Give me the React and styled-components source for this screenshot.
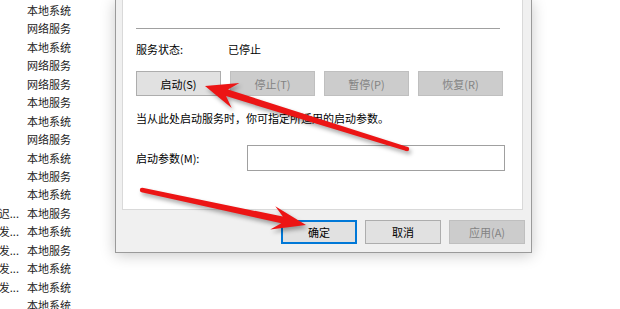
import React from 'react'
import styled, { createGlobalStyle } from 'styled-components'

const GlobalStyle = createGlobalStyle`
  html, body {
    margin: 0;
    padding: 0;
    background: #ffffff;
  }
  body {
    font-family: "Noto Sans CJK SC", "Microsoft YaHei", sans-serif;
  }
`

const services = [
  ['', '本地系统'],
  ['', '网络服务'],
  ['', '本地系统'],
  ['', '网络服务'],
  ['', '网络服务'],
  ['', '本地服务'],
  ['', '本地系统'],
  ['', '网络服务'],
  ['', '本地系统'],
  ['', '本地服务'],
  ['', '本地系统'],
  ['自动(延迟...', '本地服务'],
  ['手动(触发...', '本地系统'],
  ['手动(触发...', '本地服务'],
  ['手动(触发...', '本地系统'],
  ['手动(触发...', '本地系统'],
  ['', '本地系统'],
]

const controlButtons = [
  { label: '启动(S)', enabled: true },
  { label: '停止(T)', enabled: false },
  { label: '暂停(P)', enabled: false },
  { label: '恢复(R)', enabled: false },
]

// arrow polygon built from tail -> tip
const arrowPoints = (tail, tip, headLen, headHalf, shaftTail, shaftHead) => {
  const dx = tip[0] - tail[0]
  const dy = tip[1] - tail[1]
  const len = Math.hypot(dx, dy)
  const ux = dx / len
  const uy = dy / len
  const nx = -uy
  const ny = ux
  const at = (back, side) => [tip[0] - ux * back + nx * side, tip[1] - uy * back + ny * side]
  const notch = headLen * 0.72
  const pts = [
    at(len, shaftTail),
    at(notch, shaftHead),
    at(headLen, headHalf),
    tip,
    at(headLen, -headHalf),
    at(notch, -shaftHead),
    at(len, -shaftTail),
  ]
  return pts.map((p) => p[0].toFixed(1) + ',' + p[1].toFixed(1)).join(' ')
}

const arrows = [
  { tail: [407, 149], tip: [205, 86], head: 32, half: 13 },
  { tail: [142, 190], tip: [306, 225], head: 34, half: 12 },
]

const App = () => {
  return (
    <>
      <GlobalStyle />
      <Page>
        <ServiceList>
          {services.map(([startup, account], index) => (
            <ServiceRow key={index}>
              <StartupCell>{startup && <span>{startup}</span>}</StartupCell>
              <AccountCell>{account}</AccountCell>
            </ServiceRow>
          ))}
        </ServiceList>

        <Dialog>
          <Panel>
            <Separator />
            <StatusRow>
              <FieldLabel>服务状态:</FieldLabel>
              <span>已停止</span>
            </StatusRow>
            <ButtonRow>
              {controlButtons.map((btn) => (
                <ControlButton key={btn.label} disabled={!btn.enabled}>
                  {btn.label}
                </ControlButton>
              ))}
            </ButtonRow>
            <Hint>当从此处启动服务时，你可指定所适用的启动参数。</Hint>
            <ParamRow>
              <ParamLabel>启动参数(M):</ParamLabel>
              <ParamInput />
            </ParamRow>
          </Panel>
          <Footer>
            <FooterButton $primary>确定</FooterButton>
            <FooterButton>取消</FooterButton>
            <FooterButton disabled>应用(A)</FooterButton>
          </Footer>
        </Dialog>

        <ArrowLayer width="620" height="309" viewBox="0 0 620 309">
          {arrows.map((a, i) => (
            <g key={i}>
              <polygon points={arrowPoints(a.tail, a.tip, a.head, a.half, 2.2, 3.4)} fill="#ec1515" />
              <circle cx={a.tail[0]} cy={a.tail[1]} r="2.2" fill="#ec1515" />
            </g>
          ))}
        </ArrowLayer>
      </Page>
    </>
  )
}

export default App

const Page = styled.div`
  position: relative;
  display: flex;
  flex-flow: row nowrap;
  align-items: flex-start;
  width: 620px;
  height: 309px;
  overflow: hidden;
  background: #ffffff;
`

const ServiceList = styled.div`
  width: 100px;
  flex: none;
  padding-top: 1px;
  font-size: 11px;
  color: #222;
`

const ServiceRow = styled.div`
  display: flex;
  height: 18.44px;
  line-height: 18.44px;
  white-space: nowrap;
`

const StartupCell = styled.div`
  width: 19px;
  flex: none;
  display: flex;
  justify-content: flex-end;
  overflow: hidden;
  margin-right: 8px;
  span {
    flex: none;
  }
`

const AccountCell = styled.div`
  flex: none;
`

const Dialog = styled.div`
  width: 403px;
  height: 252px;
  margin-left: 15px;
  flex: none;
  display: flex;
  flex-flow: column;
  background: #f0f0f0;
  border: 1px solid #9a9a9a;
  border-top: none;
  box-shadow: 0 2px 14px rgba(0, 0, 0, 0.22);
  padding: 0 6px;
  box-sizing: content-box;
  font-size: 11px;
  color: #000;
`

const Panel = styled.div`
  width: 386px;
  height: 209px;
  background: #ffffff;
  border: 1px solid #d9d9d9;
  border-top: none;
  padding-left: 13px;
  box-sizing: content-box;
`

const Separator = styled.div`
  width: 364px;
  height: 1px;
  margin-top: 28px;
  background: #a0a0a0;
`

const StatusRow = styled.div`
  display: flex;
  align-items: center;
  height: 18px;
  margin-top: 11px;
`

const FieldLabel = styled.span`
  width: 92px;
`

const ButtonRow = styled.div`
  display: flex;
  gap: 9px;
  margin-top: 13px;
`

const ControlButton = styled.button`
  width: 85px;
  height: 25px;
  padding: 0;
  font-family: inherit;
  font-size: 11px;
  color: #000;
  background: #e1e1e1;
  border: 1px solid #adadad;
  &:disabled {
    color: #838383;
    background: #cccccc;
    border-color: #bfbfbf;
  }
`

const Hint = styled.div`
  margin-top: 13px;
  height: 18px;
  line-height: 18px;
`

const ParamRow = styled.div`
  display: flex;
  align-items: center;
  margin-top: 18px;
`

const ParamLabel = styled.span`
  width: 111px;
`

const ParamInput = styled.div`
  width: 256px;
  height: 24px;
  background: #ffffff;
  border: 1px solid #a0a0a0;
`

const Footer = styled.div`
  display: flex;
  justify-content: flex-end;
  gap: 8px;
  padding-top: 10px;
`

const FooterButton = styled.button`
  width: 76px;
  height: 24px;
  padding: 0;
  font-family: inherit;
  font-size: 11px;
  color: #000;
  background: #e1e1e1;
  border: ${(p) => (p.$primary ? '2px solid #0078d7' : '1px solid #adadad')};
  &:disabled {
    color: #838383;
    background: #cccccc;
    border-color: #bfbfbf;
  }
`

const ArrowLayer = styled.svg`
  position: absolute;
  left: 0;
  top: 0;
  pointer-events: none;
  filter: drop-shadow(2px 3px 2px rgba(0, 0, 0, 0.35));
`
